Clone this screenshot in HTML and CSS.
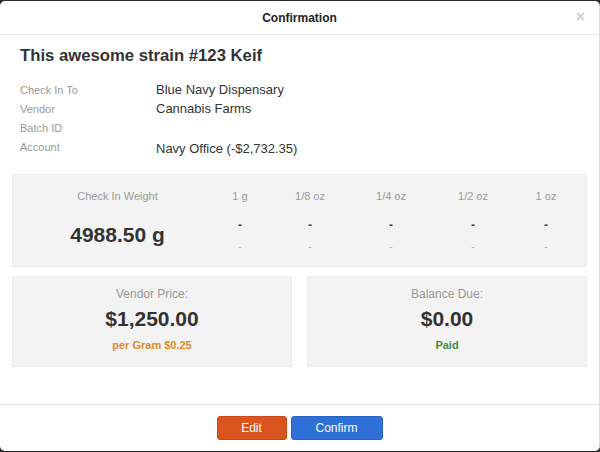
FILE: index.html
```html
<!DOCTYPE html>
<html lang="en">
<head>
    <meta charset="UTF-8">
    <meta name="viewport" content="width=device-width, initial-scale=1.0">
    <title>Confirmation</title>
    <link rel="stylesheet" href="styles.css">
</head>
<body>
    <div class="modal">
        <div class="modal-header">
            <h3>Confirmation</h3>
            <span class="close">&times;</span>
        </div>
        <div class="modal-body">
            <h2 class="product">This awesome strain #123 Keif</h2>
            <div class="info">
                <div class="info-row"><span class="label">Check In To</span><span class="value">Blue Navy Dispensary</span></div>
                <div class="info-row"><span class="label">Vendor</span><span class="value">Cannabis Farms</span></div>
                <div class="info-row"><span class="label">Batch ID</span><span class="value"></span></div>
                <div class="info-row account"><span class="label">Account</span><span class="value">Navy Office (-$2,732.35)</span></div>
            </div>

            <div class="weight-box">
                <div class="weight-col main">
                    <div class="col-head">Check In Weight</div>
                    <div class="weight-total">4988.50 g</div>
                </div>
                <div class="weight-col">
                    <div class="col-head">1 g</div>
                    <div class="dash">-</div>
                    <div class="dash light">-</div>
                </div>
                <div class="weight-col">
                    <div class="col-head">1/8 oz</div>
                    <div class="dash">-</div>
                    <div class="dash light">-</div>
                </div>
                <div class="weight-col">
                    <div class="col-head">1/4 oz</div>
                    <div class="dash">-</div>
                    <div class="dash light">-</div>
                </div>
                <div class="weight-col">
                    <div class="col-head">1/2 oz</div>
                    <div class="dash">-</div>
                    <div class="dash light">-</div>
                </div>
                <div class="weight-col">
                    <div class="col-head">1 oz</div>
                    <div class="dash">-</div>
                    <div class="dash light">-</div>
                </div>
            </div>

            <div class="price-row">
                <div class="price-box">
                    <div class="price-label">Vendor Price:</div>
                    <div class="price-value">$1,250.00</div>
                    <div class="price-note orange">per Gram $0.25</div>
                </div>
                <div class="price-box">
                    <div class="price-label">Balance Due:</div>
                    <div class="price-value">$0.00</div>
                    <div class="price-note green">Paid</div>
                </div>
            </div>
        </div>
        <div class="modal-footer">
            <button class="btn btn-edit">Edit</button>
            <button class="btn btn-confirm">Confirm</button>
        </div>
    </div>
</body>
</html>
```

FILE: styles.css
```css
html, body {
    margin: 0;
    padding: 0;
}
body {
    background-color: #2b2b2b;
    font-family: "Liberation Sans", Arial, sans-serif;
    color: #333;
    padding-top: 1px;
}
.modal {
    position: relative;
    background-color: #fff;
    height: 450px;
    border-radius: 5px;
    border-right: 1px solid #dcdcdc;
    box-sizing: border-box;
    display: flex;
    flex-direction: column;
}
.modal-header {
    height: 33px;
    border-bottom: 1px solid #e5e5e5;
    display: flex;
    align-items: center;
    justify-content: center;
}
.modal-header h3 {
    margin: 0;
    font-size: 12px;
    font-weight: bold;
    color: #222;
}
.close {
    position: absolute;
    right: 14px;
    top: 7px;
    font-size: 16px;
    font-weight: bold;
    color: #d0d0d0;
}
.modal-body {
    flex: 1;
    padding: 0 12px;
}
.product {
    margin: 11px 0 0 8px;
    font-size: 16.7px;
    font-weight: bold;
    color: #333;
    line-height: 20px;
}
.info {
    margin: 14px 0 0 8px;
}
.info-row {
    display: flex;
    height: 19px;
    align-items: center;
}
.info-row.account .value {
    padding-top: 3px;
}
.label {
    width: 136px;
    font-size: 11px;
    color: #999;
}
.value {
    font-size: 13px;
    color: #333;
}
.weight-box {
    margin-top: 18px;
    height: 93px;
    box-sizing: border-box;
    background-color: #f3f3f3;
    border: 1px solid #ebebeb;
    display: grid;
    grid-template-columns: 209px 36px 104px 58px 106px 40px;
}
.weight-col {
    text-align: center;
    padding-top: 15px;
}
.col-head {
    font-size: 11px;
    color: #999;
    height: 14px;
}
.weight-total {
    margin-top: 19px;
    font-size: 21px;
    font-weight: bold;
    color: #333;
}
.dash {
    font-size: 12px;
    font-weight: bold;
    color: #444;
    margin-top: 14px;
    height: 14px;
    line-height: 14px;
}
.dash.light {
    color: #aaa;
    font-size: 10px;
    font-weight: normal;
    margin-top: 8px;
}
.price-row {
    display: flex;
    gap: 15px;
    margin-top: 9px;
}
.price-box {
    flex: 1;
    height: 91px;
    box-sizing: border-box;
    background-color: #f3f3f3;
    border: 1px solid #ebebeb;
    text-align: center;
    padding-top: 10px;
}
.price-label {
    font-size: 12px;
    color: #999;
}
.price-value {
    margin-top: 6px;
    font-size: 21px;
    font-weight: bold;
    color: #333;
}
.price-note {
    margin-top: 8px;
    font-size: 11px;
    font-weight: bold;
}
.orange {
    color: #e08a1e;
}
.green {
    color: #3f8f3f;
}
.modal-footer {
    height: 47px;
    border-top: 1px solid #e5e5e5;
    display: flex;
    justify-content: center;
    gap: 4px;
    padding-top: 11px;
    box-sizing: border-box;
}
.btn {
    height: 24px;
    border: 1px solid transparent;
    border-radius: 3px;
    color: #fff;
    font-family: "Liberation Sans", Arial, sans-serif;
    font-size: 12px;
    padding: 0;
    cursor: pointer;
}
.btn-edit {
    width: 70px;
    background-color: #d9541e;
    border-color: #c64b18;
}
.btn-confirm {
    width: 92px;
    background-color: #2e6fd8;
    border-color: #2a63c2;
}
```
